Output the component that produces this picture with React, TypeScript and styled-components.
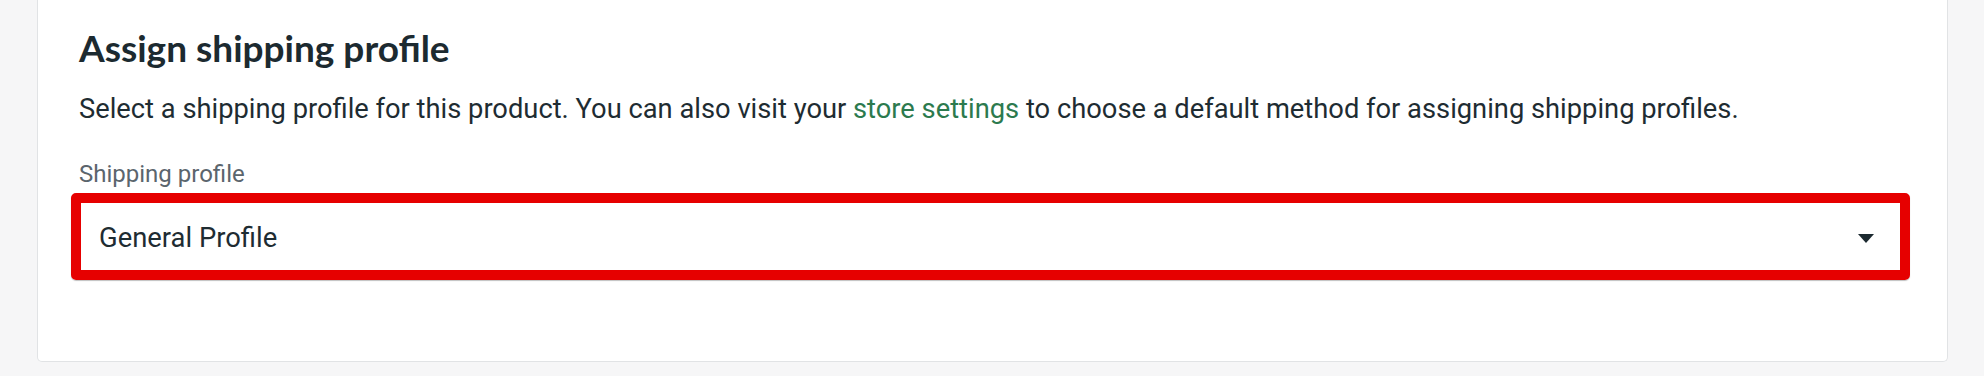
import React from "react";
import styled, { createGlobalStyle } from "styled-components";

const GlobalStyle = createGlobalStyle`
  html, body {
    margin: 0;
    padding: 0;
    background: #f6f6f7;
  }
`;

const Page = styled.div`
  padding: 0 36px 15px 37px;
  font-family: Roboto, "Liberation Sans", sans-serif;
  color: #1e2c32;
`;

const Card = styled.section`
  background: #ffffff;
  border: 1px solid #e1e3e5;
  border-top: none;
  border-radius: 0 0 5px 5px;
  padding: 26px 40px 81px 41px;
`;

const Title = styled.h2`
  margin: 0;
  font-family: Lato, "Noto Sans", sans-serif;
  font-weight: 700;
  font-size: 37px;
  line-height: 44px;
  color: #1c2a30;
`;

const Description = styled.p`
  margin: 21px 0 0;
  font-size: 27.3px;
  line-height: 36px;
`;

const Link = styled.a`
  color: #2c7a4e;
  text-decoration: none;
`;

const Label = styled.label`
  display: block;
  margin-top: 31px;
  font-size: 24px;
  line-height: 32px;
  color: #5b656d;
`;

const SelectBox = styled.div`
  margin: 3px -3px 0 -8px;
  display: flex;
  align-items: center;
  justify-content: space-between;
  height: 64px;
  padding: 3px 26px 0 18px;
  box-sizing: content-box;
  border: 10px solid #e60000;
  border-radius: 5px;
  box-shadow: 0 1px 1px rgba(0, 0, 0, 0.25);
  font-size: 27.4px;
  line-height: 36px;
  color: #1e2c32;
  cursor: pointer;
`;

const Caret = styled.svg`
  width: 16px;
  height: 9px;
  flex-shrink: 0;
`;

export default function App() {
  return (
    <>
      <GlobalStyle />
      <Page>
        <Card>
          <Title>Assign shipping profile</Title>
          <Description>
            Select a shipping profile for this product. You can also visit your{" "}
            <Link href="#">store settings</Link> to choose a default method for
            assigning shipping profiles.
          </Description>
          <Label>Shipping profile</Label>
          <SelectBox role="combobox" aria-label="Shipping profile">
            <span>General Profile</span>
            <Caret viewBox="0 0 16 9">
              <path d="M0 0h16L8 9z" fill="#1c2a30" />
            </Caret>
          </SelectBox>
        </Card>
      </Page>
    </>
  );
}
